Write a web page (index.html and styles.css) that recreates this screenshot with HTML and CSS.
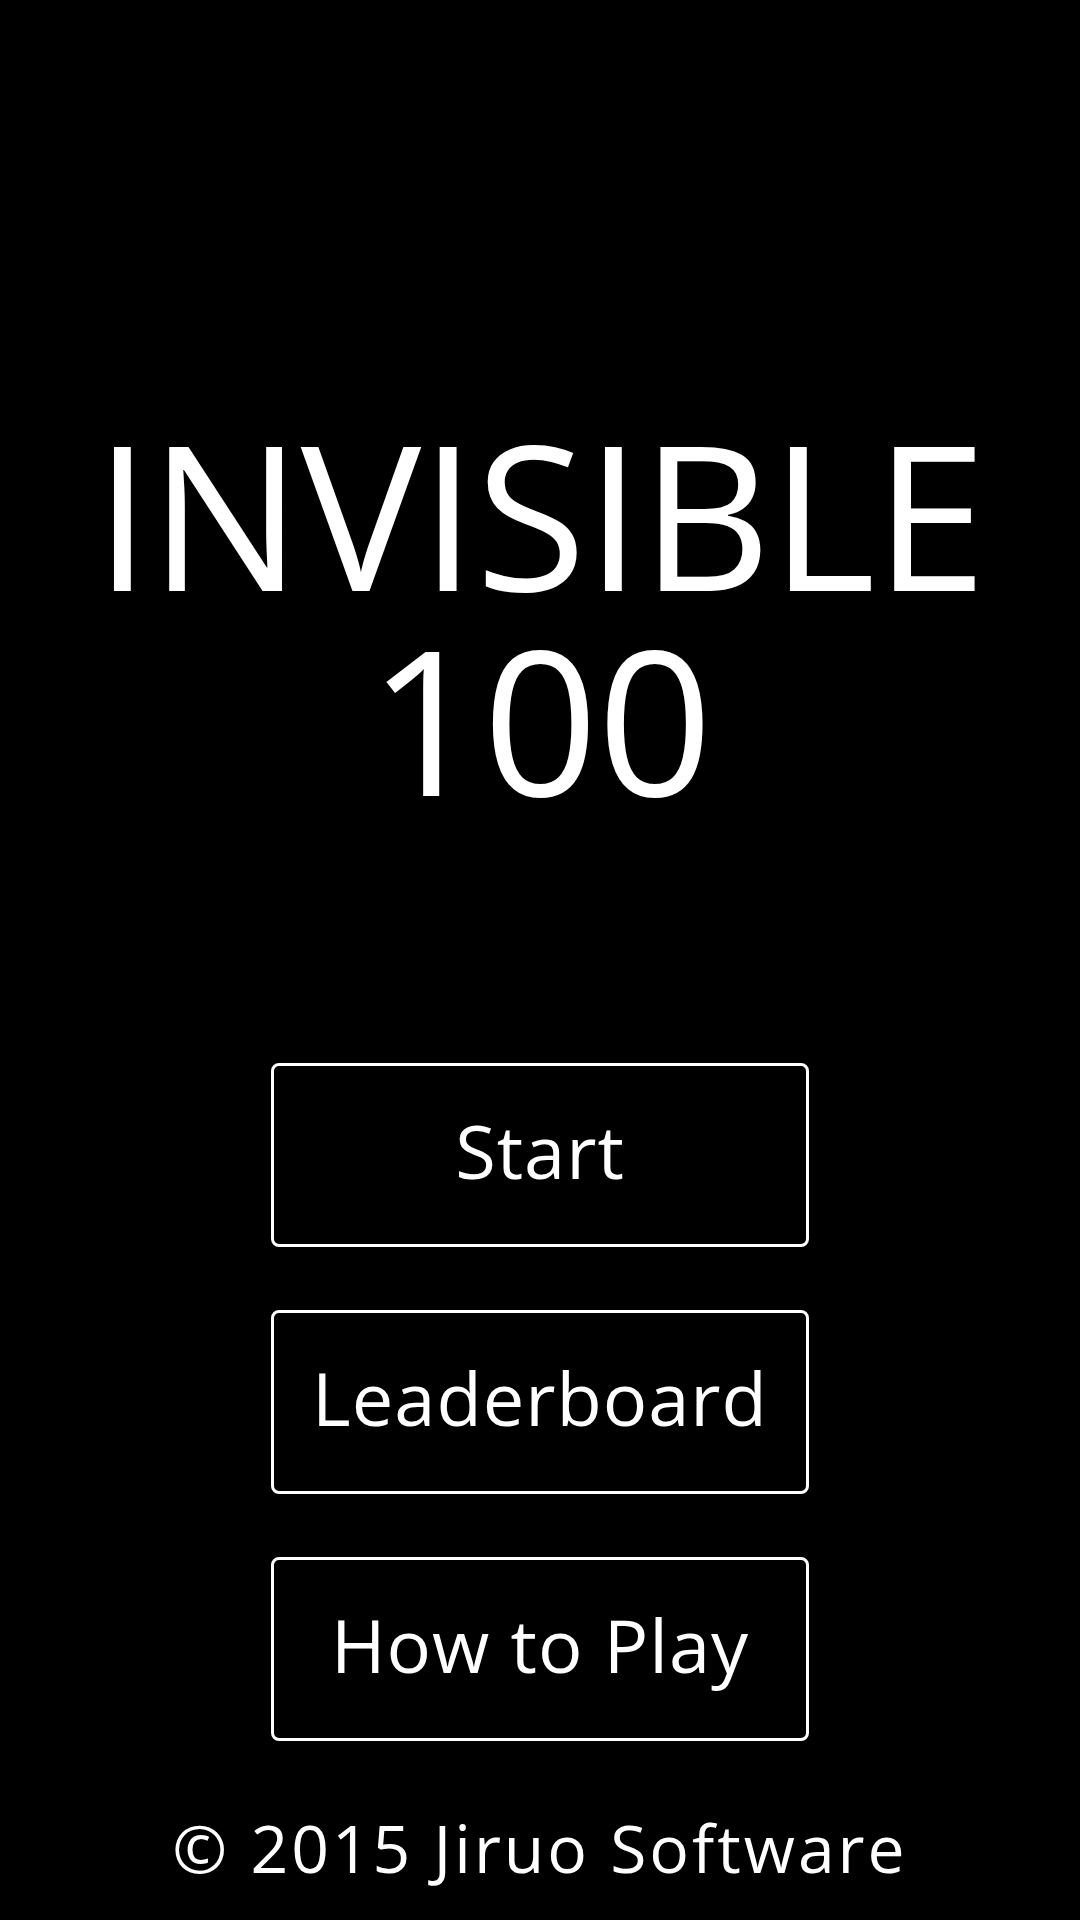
FILE: index.html
```html
<html>
	<head>
		<title>Invisible 100</title>
		<meta name="viewport" content="width=device-width, initial-scale=1.0">
		<link rel="stylesheet" href="styles.css">
	</head>
	<body>
		<div class="screen">
			<div class="title">
				<div class="title-line">INVISIBLE</div>
				<div class="title-line">100</div>
			</div>
			<div class="menu">
				<div class="btn">Start</div>
				<div class="btn">Leaderboard</div>
				<div class="btn">How to Play</div>
			</div>
			<div class="footer">© 2015 Jiruo Software</div>
		</div>
	</body>
</html>
```

FILE: styles.css
```css
body {
	margin: 0;
	background-color: #000;
	color: #fff;
	font-family: "Open Sans", "Noto Sans", sans-serif;
	font-weight: 370;
}
.screen {
	width: 1080px;
	height: 1920px;
	display: flex;
	flex-direction: column;
	align-items: center;
}
.title {
	margin-top: 410px;
	text-align: center;
}
.title-line {
	font-size: 202px;
	line-height: 205px;
	letter-spacing: -1px;
}
.menu {
	margin-top: 243px;
	display: flex;
	flex-direction: column;
	gap: 63px;
}
.btn {
	width: 538px;
	height: 184px;
	box-sizing: border-box;
	padding-bottom: 10px;
	border: 3px solid #fff;
	border-radius: 8px;
	display: flex;
	justify-content: center;
	align-items: center;
	font-size: 74px;
	letter-spacing: 1px;
	user-select: none;
}
.footer {
	margin-top: 66px;
	font-size: 66px;
	line-height: 80px;
	letter-spacing: 3px;
}
```
